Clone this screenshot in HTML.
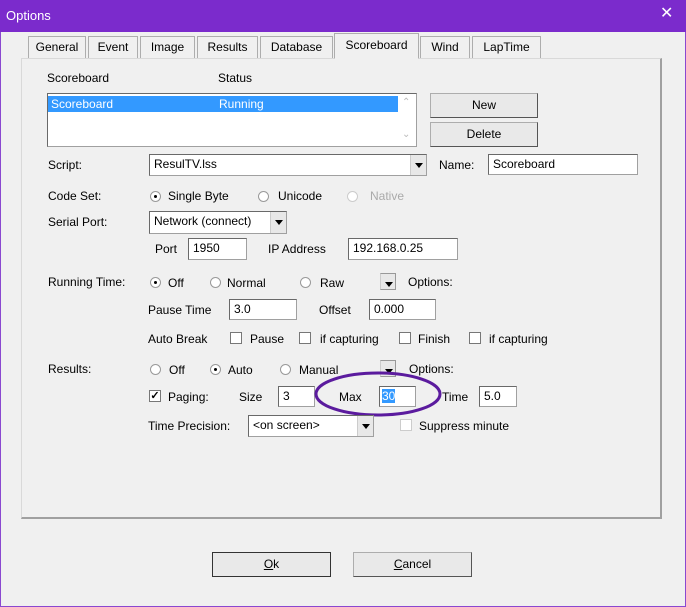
<!DOCTYPE html>
<html><head><meta charset="utf-8"><style>
*{box-sizing:border-box;margin:0;padding:0}
body{width:686px;height:607px;background:#f0f0f0;font-family:"Liberation Sans",sans-serif;font-size:12px;color:#000;position:relative;overflow:hidden}
.a{position:absolute;white-space:nowrap;line-height:14px}
.title{position:absolute;left:0;top:0;width:686px;height:32px;background:#7b2bcc;color:#fff;font-size:13px}
.frame{position:absolute;left:0;top:32px;width:686px;height:575px;border:1px solid #8a48d0;border-top:none}
.tab{position:absolute;top:36px;height:22px;border:1px solid #adadad;border-bottom:none;background:#f0f0f0;text-align:center;line-height:20px}
.panel{position:absolute;left:21px;top:58px;width:641px;height:461px;border:1px solid #d9d9d9;border-right:2px solid #a0a0a0;border-bottom:2px solid #a0a0a0;background:#f0f0f0}
.f{position:absolute;background:#fff;border:1px solid #a0a0a0;border-top-color:#696969;border-left-color:#696969;padding-left:4px;line-height:18px}
.btn{position:absolute;background:#e9e9e9;border:1px solid #adadad;border-right-color:#555;border-bottom-color:#555;text-align:center;line-height:22px}
.dd{position:absolute;width:16px;background:#e8e8e8;border-left:1px solid #ccc}
.dd:after{content:"";position:absolute;left:4px;top:8px;border:4px solid transparent;border-top:5px solid #000}
.r{position:absolute;width:11px;height:11px;border-radius:50%;border:1px solid #999;background:#fff}
.r.on:after{content:"";position:absolute;left:3px;top:3px;width:3px;height:3px;border-radius:50%;background:#000}
.c{position:absolute;width:12px;height:12px;border:1px solid #777;background:#fff}
</style></head><body>
<div class="frame"></div>
<div class="title"><span class="a" style="left:6px;top:9px">Options</span><span class="a" style="left:660px;top:7px;font-size:16px">✕</span></div>

<div class="panel"></div>
<div class="tab" style="left:28px;width:58px">General</div>
<div class="tab" style="left:88px;width:50px">Event</div>
<div class="tab" style="left:140px;width:55px">Image</div>
<div class="tab" style="left:197px;width:61px">Results</div>
<div class="tab" style="left:260px;width:73px">Database</div>
<div class="tab" style="left:334px;width:85px;top:33px;height:26px;border-bottom:1px solid #f0f0f0;line-height:22px">Scoreboard</div>
<div class="tab" style="left:420px;width:50px">Wind</div>
<div class="tab" style="left:472px;width:69px">LapTime</div>

<span class="a" style="left:47px;top:71px">Scoreboard</span>
<span class="a" style="left:218px;top:71px">Status</span>
<div class="f" style="left:47px;top:93px;width:370px;height:54px;padding:0"></div>
<div class="a" style="left:48px;top:96px;width:350px;height:16px;background:#3399ff;color:#fff;line-height:16px"><span style="position:absolute;left:3px">Scoreboard</span><span style="position:absolute;left:171px">Running</span></div>
<span class="a" style="left:402px;top:96px;color:#bbb;font-size:10px">⌃</span>
<span class="a" style="left:402px;top:128px;color:#bbb;font-size:10px">⌄</span>
<div class="btn" style="left:430px;top:93px;width:108px;height:25px">New</div>
<div class="btn" style="left:430px;top:122px;width:108px;height:25px">Delete</div>

<span class="a" style="left:48px;top:158px">Script:</span>
<div class="f" style="left:149px;top:154px;width:278px;height:22px">ResulTV.lss<div class="dd" style="right:0;top:0;height:20px"></div></div>
<span class="a" style="left:439px;top:158px">Name:</span>
<div class="f" style="left:488px;top:154px;width:150px;height:21px">Scoreboard</div>

<span class="a" style="left:48px;top:189px">Code Set:</span>
<div class="r on" style="left:150px;top:191px"></div><span class="a" style="left:168px;top:189px">Single Byte</span>
<div class="r" style="left:258px;top:191px"></div><span class="a" style="left:278px;top:189px">Unicode</span>
<div class="r" style="left:347px;top:191px;border-color:#ccc"></div><span class="a" style="left:370px;top:189px;color:#aaa">Native</span>

<span class="a" style="left:48px;top:215px">Serial Port:</span>
<div class="f" style="left:149px;top:211px;width:138px;height:23px;background:#fff">Network (connect)<div class="dd" style="right:0;top:0;height:21px"></div></div>

<span class="a" style="left:155px;top:242px">Port</span>
<div class="f" style="left:188px;top:238px;width:59px;height:22px">1950</div>
<span class="a" style="left:268px;top:242px">IP Address</span>
<div class="f" style="left:348px;top:238px;width:110px;height:22px">192.168.0.25</div>

<span class="a" style="left:48px;top:275px">Running Time:</span>
<div class="r on" style="left:150px;top:277px"></div><span class="a" style="left:168px;top:276px">Off</span>
<div class="r" style="left:210px;top:277px"></div><span class="a" style="left:227px;top:276px">Normal</span>
<div class="r" style="left:300px;top:277px"></div><span class="a" style="left:320px;top:276px">Raw</span>
<div class="dd" style="left:380px;top:273px;height:17px;border:1px solid #999;border-left-color:#ccc"></div>
<span class="a" style="left:408px;top:275px">Options:</span>

<span class="a" style="left:148px;top:303px">Pause Time</span>
<div class="f" style="left:229px;top:299px;width:68px;height:21px">3.0</div>
<span class="a" style="left:319px;top:303px">Offset</span>
<div class="f" style="left:369px;top:299px;width:67px;height:21px">0.000</div>

<span class="a" style="left:148px;top:332px">Auto Break</span>
<div class="c" style="left:230px;top:332px"></div><span class="a" style="left:250px;top:332px">Pause</span>
<div class="c" style="left:299px;top:332px"></div><span class="a" style="left:320px;top:332px">if capturing</span>
<div class="c" style="left:399px;top:332px"></div><span class="a" style="left:418px;top:332px">Finish</span>
<div class="c" style="left:469px;top:332px"></div><span class="a" style="left:489px;top:332px">if capturing</span>

<span class="a" style="left:48px;top:362px">Results:</span>
<div class="r" style="left:150px;top:364px"></div><span class="a" style="left:169px;top:363px">Off</span>
<div class="r on" style="left:210px;top:364px"></div><span class="a" style="left:228px;top:363px">Auto</span>
<div class="r" style="left:280px;top:364px"></div><span class="a" style="left:299px;top:363px">Manual</span>
<div class="dd" style="left:380px;top:360px;height:17px;border:1px solid #999;border-left-color:#ccc"></div>
<span class="a" style="left:409px;top:362px">Options:</span>

<div class="c" style="left:149px;top:390px;text-align:center;line-height:10px;font-size:11px;font-weight:bold">✓</div><span class="a" style="left:168px;top:390px">Paging:</span>
<span class="a" style="left:239px;top:390px">Size</span>
<div class="f" style="left:278px;top:386px;width:37px;height:21px">3</div>
<span class="a" style="left:339px;top:390px">Max</span>
<div class="f" style="left:379px;top:386px;width:37px;height:21px;padding-left:2px"><span style="background:#3399ff;color:#fff">30</span></div>
<span class="a" style="left:442px;top:390px">Time</span>
<div class="f" style="left:479px;top:386px;width:38px;height:21px">5.0</div>
<svg style="position:absolute;left:0;top:0" width="686" height="607"><ellipse cx="378" cy="394" rx="62" ry="21" fill="none" stroke="#5b1b9e" stroke-width="3"/></svg>

<span class="a" style="left:148px;top:419px">Time Precision:</span>
<div class="f" style="left:248px;top:415px;width:126px;height:22px">&lt;on screen&gt;<div class="dd" style="right:0;top:0;height:20px"></div></div>
<div class="c" style="left:400px;top:419px;border-color:#ccc"></div><span class="a" style="left:419px;top:419px">Suppress minute</span>

<div class="btn" style="left:212px;top:552px;width:119px;height:25px;border:1px solid #333"><u>O</u>k</div>
<div class="btn" style="left:353px;top:552px;width:119px;height:25px"><u>C</u>ancel</div>
</body></html>
